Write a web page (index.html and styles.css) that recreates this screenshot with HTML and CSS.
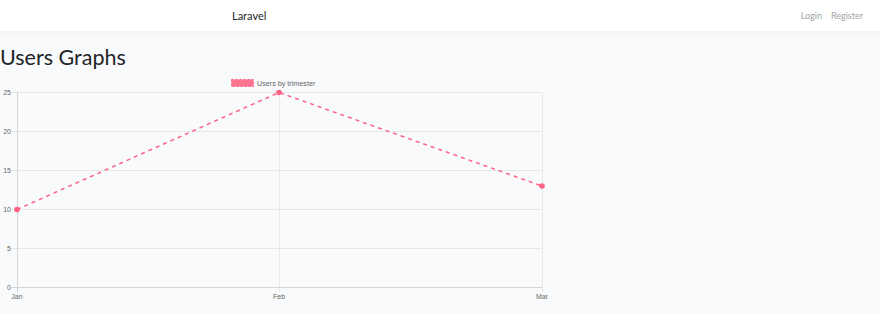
FILE: index.html
```html
<!DOCTYPE html>
<html lang="en">
<head>
    <meta charset="UTF-8">
    <meta name="viewport" content="width=device-width, initial-scale=1.0">
    <title>Users Graphs</title>
    <link rel="stylesheet" href="styles.css">
</head>
<body>
    <nav class="navbar">
        <a href="#" class="brand">Laravel</a>
        <div class="nav-right">
            <a href="#" class="nav-link">Login</a>
            <a href="#" class="nav-link">Register</a>
        </div>
    </nav>

    <main class="content">
        <h1>Users Graphs</h1>

        <svg class="chart" width="560" height="232" viewBox="0 0 560 232">
            <!-- legenda -->
            <rect x="231.5" y="5.5" width="22" height="7" fill="rgba(255,99,132,0.9)" stroke="#ff6384" stroke-dasharray="2,2"/>
            <text x="257" y="11.5" class="legend">Users by trimester</text>

            <!-- grade -->
            <g stroke="#e6e7e9" stroke-width="1">
                <line x1="12" y1="18.5" x2="542" y2="18.5"/>
                <line x1="12" y1="57.5" x2="542" y2="57.5"/>
                <line x1="12" y1="96.5" x2="542" y2="96.5"/>
                <line x1="12" y1="135.5" x2="542" y2="135.5"/>
                <line x1="12" y1="174.5" x2="542" y2="174.5"/>
                <line x1="279.5" y1="18" x2="279.5" y2="218"/>
                <line x1="542.5" y1="18" x2="542.5" y2="218"/>
            </g>
            <g stroke="#d3d4d6" stroke-width="1">
                <line x1="12" y1="213.5" x2="542" y2="213.5"/>
                <line x1="17.5" y1="18" x2="17.5" y2="218"/>
            </g>

            <!-- eixo y -->
            <g class="tick" text-anchor="end">
                <text x="11" y="21">25</text>
                <text x="11" y="60">20</text>
                <text x="11" y="99">15</text>
                <text x="11" y="138">10</text>
                <text x="11" y="177">5</text>
                <text x="11" y="216">0</text>
            </g>

            <!-- eixo x -->
            <g class="tick" text-anchor="middle">
                <text x="17" y="225">Jan</text>
                <text x="279" y="225">Feb</text>
                <text x="542" y="225">Mar</text>
            </g>

            <!-- dados -->
            <polyline points="17,135.5 279,18.5 542,112" fill="none" stroke="#ff6384" stroke-width="1.5" stroke-dasharray="4,4"/>
            <g fill="#ff6384">
                <circle cx="17" cy="135.5" r="2.8"/>
                <circle cx="279" cy="18.5" r="2.8"/>
                <circle cx="542" cy="112" r="2.8"/>
            </g>
        </svg>
    </main>
</body>
</html>
```

FILE: styles.css
```css
body {
    font-family: Lato, "Open Sans", sans-serif;
    background-color: #f8fafc;
    color: #212529;
    margin: 0;
}

.navbar {
    height: 31px;
    background-color: #fff;
    box-shadow: 0 2px 4px rgba(0, 0, 0, 0.04);
    display: flex;
    align-items: center;
    justify-content: space-between;
    padding: 0 17px 0 232px;
}

.brand {
    color: #212529;
    text-decoration: none;
    font-size: 11px;
}

.nav-right {
    display: flex;
    gap: 9px;
}

.nav-link {
    color: #a0a3a6;
    text-decoration: none;
    font-size: 9px;
}

.content {
    padding-top: 11px;
}

h1 {
    font-weight: 400;
    font-size: 21.5px;
    margin: 0 0 2px 0;
    line-height: 30px;
}

.chart {
    display: block;
    font-family: "Liberation Sans", Arial, sans-serif;
}

.legend {
    font-size: 7.2px;
    fill: #666;
}

.tick {
    font-size: 7px;
    fill: #666;
}
```
